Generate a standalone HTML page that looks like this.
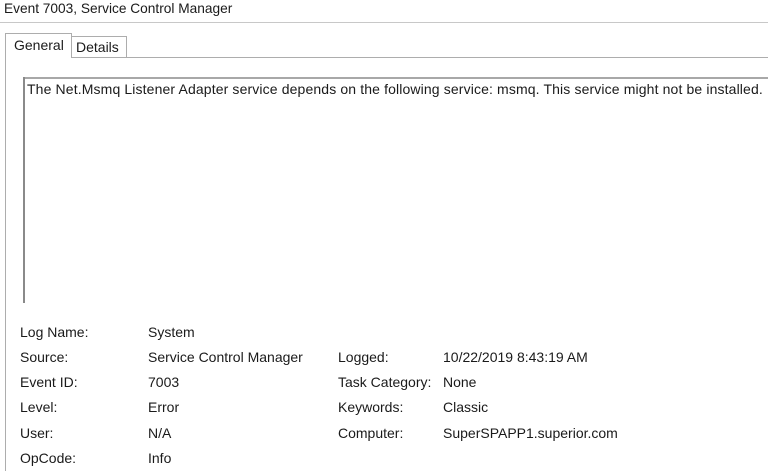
<!DOCTYPE html>
<html><head><style>
body{margin:0;width:768px;height:471px;background:#fff;font-family:"Liberation Sans",sans-serif;font-size:14px;color:#1a1a1a;position:relative;overflow:hidden}
.a{position:absolute;white-space:nowrap}
.l{position:absolute;background:#a0a0a0}
</style></head><body>
<div class="a" style="left:4px;top:1px;font-size:13.7px">Event 7003, Service Control Manager</div>
<div class="l" style="left:0;top:22px;width:768px;height:1px;background:#c8c8c8"></div>
<div class="a" style="left:5px;top:33px;width:65px;height:24px;border:1px solid #adadad;border-bottom:none;background:#fff;z-index:2"></div>
<div class="a" style="left:14px;top:37px;z-index:3">General</div>
<div class="a" style="left:71px;top:36px;width:55px;height:21px;border:1px solid #adadad;border-bottom:none;border-left:none"></div>
<div class="a" style="left:76px;top:39px">Details</div>
<div class="l" style="left:5px;top:57px;width:763px;height:1px;background:#adadad"></div>
<div class="l" style="left:5px;top:57px;width:1px;height:414px;background:#adadad"></div>
<div class="l" style="left:23px;top:77px;width:745px;height:2px;background:#a8a8a8"></div>
<div class="l" style="left:23px;top:77px;width:2px;height:226px;background:#8a8a8a"></div>
<div class="a" style="left:27px;top:81px;letter-spacing:0.13px">The Net.Msmq Listener Adapter service depends on the following service: msmq. This service might not be installed.</div>
<div class="a" style="left:20px;top:324px">Log Name:</div><div class="a" style="left:148px;top:324px">System</div>
<div class="a" style="left:20px;top:349px">Source:</div><div class="a" style="left:148px;top:349px">Service Control Manager</div>
<div class="a" style="left:338px;top:349px">Logged:</div><div class="a" style="left:443px;top:349px">10/22/2019 8:43:19 AM</div>
<div class="a" style="left:20px;top:374px">Event ID:</div><div class="a" style="left:148px;top:374px">7003</div>
<div class="a" style="left:338px;top:374px">Task Category:</div><div class="a" style="left:443px;top:374px">None</div>
<div class="a" style="left:20px;top:399px">Level:</div><div class="a" style="left:148px;top:399px">Error</div>
<div class="a" style="left:338px;top:399px">Keywords:</div><div class="a" style="left:443px;top:399px">Classic</div>
<div class="a" style="left:20px;top:425px">User:</div><div class="a" style="left:148px;top:425px">N/A</div>
<div class="a" style="left:338px;top:425px">Computer:</div><div class="a" style="left:443px;top:425px">SuperSPAPP1.superior.com</div>
<div class="a" style="left:20px;top:450px">OpCode:</div><div class="a" style="left:148px;top:450px">Info</div>
</body></html>
